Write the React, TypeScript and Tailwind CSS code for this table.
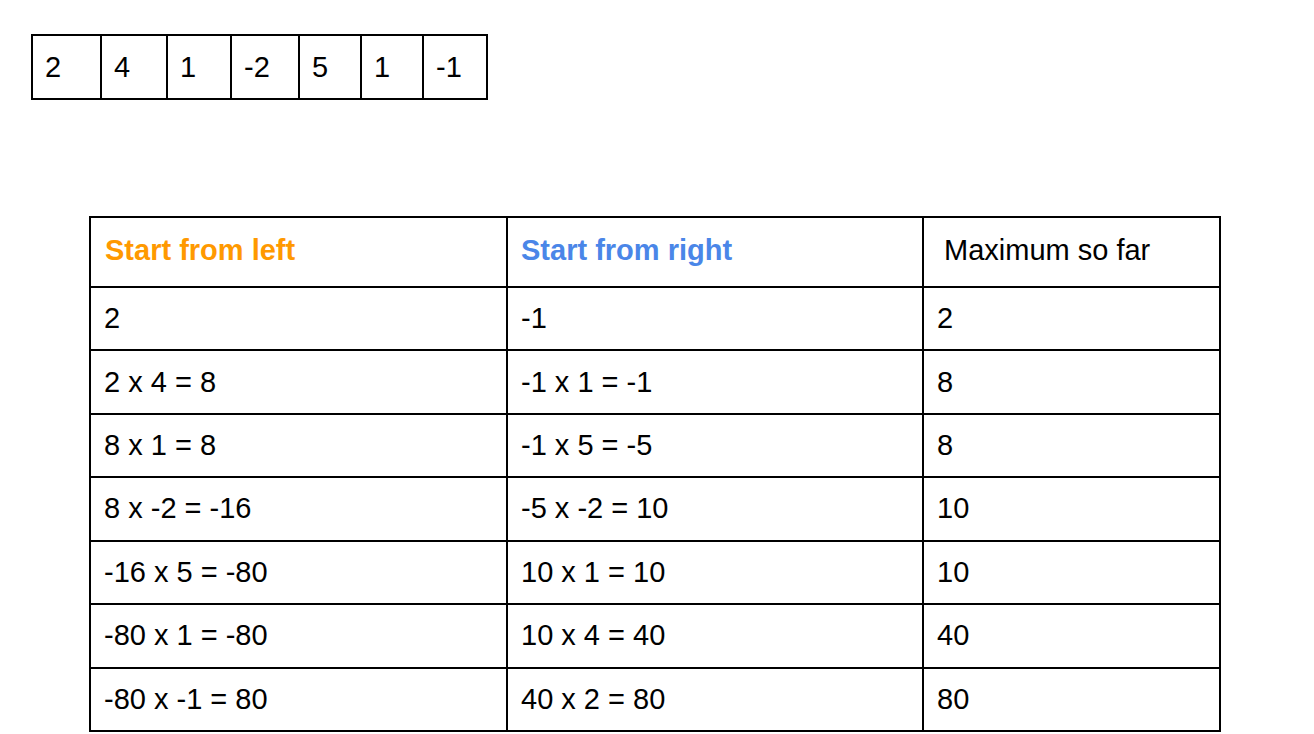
import React from "react";

const arr = [
  { v: "2", w: 67 },
  { v: "4", w: 64 },
  { v: "1", w: 62 },
  { v: "-2", w: 66 },
  { v: "5", w: 60 },
  { v: "1", w: 60 },
  { v: "-1", w: 62 },
];

const rows = [
  ["2", "-1", "2"],
  ["2 x 4 = 8", "-1 x 1 = -1", "8"],
  ["8 x 1 = 8", "-1 x 5 = -5", "8"],
  ["8 x -2 = -16", "-5 x -2 = 10", "10"],
  ["-16 x 5 = -80", "10 x 1 = 10", "10"],
  ["-80 x 1 = -80", "10 x 4 = 40", "40"],
  ["-80 x -1 = 80", "40 x 2 = 80", "80"],
];

export default function App() {
  return (
    <div
      className="w-[1314px] h-[734px] bg-white text-black overflow-hidden pt-[34px]"
      style={{ fontFamily: '"Liberation Sans", Arial, sans-serif' }}
    >
      <div className="ml-[31px] flex w-max bg-black p-[2px] gap-[2px]">
        {arr.map((c, i) => (
          <div
            key={i}
            className="bg-white h-[62px] flex items-center pl-[12px] text-[29px] leading-none"
            style={{ width: c.w }}
          >
            {c.v}
          </div>
        ))}
      </div>

      <div className="ml-[89px] mt-[116px] w-[1132px] h-[516px] bg-black p-[2px] grid gap-[2px] grid-cols-[415px_414px_295px] grid-rows-[68px_repeat(7,1fr)] text-[29px] leading-none">
        <div className="bg-white flex items-center pl-[14px] pb-[4px] font-bold text-[#ff9900]">
          Start from left
        </div>
        <div className="bg-white flex items-center pl-[13px] pb-[4px] font-bold text-[#4a86e8]">
          Start from right
        </div>
        <div className="bg-white flex items-center pl-[20px] pb-[4px]">
          Maximum so far
        </div>
        {rows.map((r, i) =>
          r.map((t, j) => (
            <div
              key={i + "-" + j}
              className="bg-white flex items-center pl-[13px]"
            >
              {t}
            </div>
          ))
        )}
      </div>
    </div>
  );
}
